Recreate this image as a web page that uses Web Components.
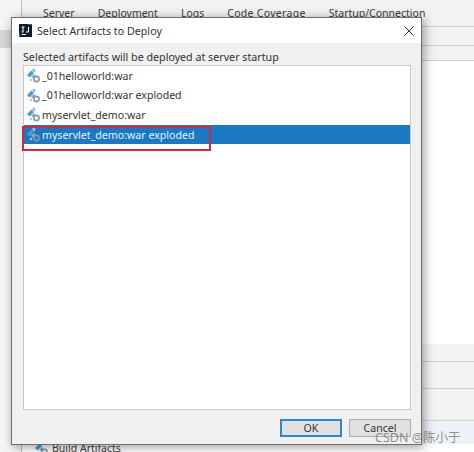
<!DOCTYPE html>
<html>
<head>
<meta charset="utf-8">
<title>Select Artifacts to Deploy</title>
<style>
    html, body { margin: 0; height: 100%; overflow: hidden; background: #fff; }
    body { position: relative; width: 474px; height: 452px; font-family: "Noto Sans", "Open Sans", sans-serif; color: #333; }
</style>
</head>
<body>
<ide-backdrop></ide-backdrop>
<artifact-dialog heading="Select Artifacts to Deploy" hint="Selected artifacts will be deployed at server startup">
    <artifact-row>_01helloworld:war</artifact-row>
    <artifact-row>_01helloworld:war exploded</artifact-row>
    <artifact-row>myservlet_demo:war</artifact-row>
    <artifact-row selected>myservlet_demo:war exploded</artifact-row>
</artifact-dialog>
<water-mark>CSDN @陈小于</water-mark>

<script>
const ARTIFACT_ICON = `
    <svg width="15" height="15" viewBox="0 0 15 15">
        <path d="M1 7 L5.5 2.5 L8 5 L3.5 9.5 Z" fill="#4f9bd0"/>
        <path d="M6 1.5 L8.5 .5 L10 3 L7.5 4.5 Z" fill="#8fbfe0"/>
        <path d="M5 8.5 L8 6 L10 8 L7 10.5 Z" fill="#7fb2d8"/>
        <circle cx="10.5" cy="11" r="2.6" fill="none" stroke="#8f959a" stroke-width="1.6"/>
        <circle cx="5" cy="12" r="1.3" fill="#b9c4cc"/>
    </svg>`;

class IdeBackdrop extends HTMLElement {
    constructor() {
        super();
        this.attachShadow({ mode: 'open' });
        this.shadowRoot.innerHTML = `
            <style>
                :host {
                    display: grid;
                    grid-template-columns: 21px 1fr;
                    width: 474px;
                    height: 452px;
                    font-size: 10.5px;
                    color: #3c3c3c;
                }
                #side { background: #f5f5f5; padding-top: 30px; box-sizing: border-box; }
                #side div { height: 18px; background: #d6d6d6; }
                #main {
                    display: flex;
                    flex-direction: column;
                    border-left: 1px solid #bdbdbd;
                    min-width: 0;
                    background: #fff;
                }
                #tabs {
                    display: flex;
                    gap: 23px;
                    height: 27px;
                    box-sizing: border-box;
                    padding: 5px 0 0 21px;
                    background: #f2f2f2;
                    border-bottom: 1px solid #cfcfcf;
                    line-height: 16px;
                    white-space: nowrap;
                }
                #coverage { letter-spacing: .3px; }
                #strip1 { height: 18px; background: #f2f2f2; border-bottom: 1px solid #cfcfcf; }
                #strip2 { height: 14px; background: #f2f2f2; border-bottom: 1px solid #cfcfcf; }
                #blank { flex: 1; }
                .low { border-bottom: 1px solid #d2d2d2; background: #f3f3f3; }
                #foot { height: 23px; background: #eef2f8; }
                #build {
                    display: flex;
                    align-items: center;
                    gap: 3px;
                    height: 8px;
                    padding-left: 12px;
                    line-height: 14px;
                    background: #fff;
                }
                #build svg { flex: none; }
            </style>
            <div id="side"><div></div></div>
            <div id="main">
                <div id="tabs">
                    <span>Server</span><span>Deployment</span><span>Logs</span><span id="coverage">Code Coverage</span><span>Startup/Connection</span>
                </div>
                <div id="strip1"></div>
                <div id="strip2"></div>
                <div id="blank"></div>
                <div class="low" style="height:17px"></div>
                <div class="low" style="height:26px"></div>
                <div class="low" style="height:31px"></div>
                <div id="foot"></div>
                <div id="build">${ARTIFACT_ICON}<span>Build Artifacts</span></div>
            </div>
        `;
    }
}

class ArtifactDialog extends HTMLElement {
    constructor() {
        super();
        this.attachShadow({ mode: 'open' });
        this.shadowRoot.innerHTML = `
            <style>
                :host {
                    position: absolute;
                    left: 11px;
                    top: 17px;
                    width: 411px;
                    height: 428px;
                    box-sizing: border-box;
                    display: flex;
                    flex-direction: column;
                    background: #f0f0f0;
                    border: 1px solid #6e6e6e;
                    box-shadow: 2px 2px 10px rgba(0,0,0,.4);
                    font-size: 10.6px;
                    color: #333;
                }
                #title {
                    display: flex;
                    align-items: center;
                    height: 25px;
                    flex: none;
                    background: #fff;
                    padding: 0 0 0 7px;
                }
                #logo { margin-right: 5px; display: block; flex: none; }
                #title span { flex: 1; font-size: 10.7px; }
                #close { margin-right: 7px; display: block; }
                #hint {
                    height: 22px;
                    box-sizing: border-box;
                    padding: 6px 0 0 11px;
                    line-height: 16px;
                    font-size: 10.7px;
                    flex: none;
                    white-space: nowrap;
                }
                #list {
                    flex: 1;
                    margin: 0 10px 0 11px;
                    background: #fff;
                    border: 1px solid #c9c9c9;
                    min-height: 0;
                }
                #buttons {
                    flex: none;
                    display: flex;
                    justify-content: flex-end;
                    gap: 7px;
                    height: 34px;
                    box-sizing: border-box;
                    padding: 9px 10px 0 0;
                }
                button {
                    width: 62px;
                    height: 18px;
                    box-sizing: border-box;
                    padding: 0;
                    font: inherit;
                    color: #333;
                    background: #e1e1e1;
                    border: 1px solid #adadad;
                }
                button.primary { border: 2px solid #2a87d0; }
            </style>
            <div id="title">
                <svg id="logo" width="13" height="13" viewBox="0 0 13 13">
                    <rect width="13" height="13" fill="#0f1a2a"/>
                    <path d="M0 13 V9 M13 0 H9" stroke="#2f7fc0" stroke-width="1.5"/>
                    <path d="M2.5 3 H5.5 M4 3 V8 H2.5 M9.5 3 V7.5 Q9.5 8 9 8 H7" stroke="#fff" stroke-width="1.1" fill="none"/>
                    <path d="M2.5 10.5 H7" stroke="#fff" stroke-width="1"/>
                </svg>
                <span></span>
                <svg id="close" width="10" height="10" viewBox="0 0 10 10">
                    <path d="M.5 .5 L9.5 9.5 M9.5 .5 L.5 9.5" stroke="#333" stroke-width="1" fill="none"/>
                </svg>
            </div>
            <div id="hint"></div>
            <div id="list"><slot></slot></div>
            <div id="buttons">
                <button class="primary">OK</button>
                <button>Cancel</button>
            </div>
        `;
    }

    connectedCallback() {
        this.shadowRoot.querySelector('#title span').textContent = this.getAttribute('heading');
        this.shadowRoot.querySelector('#hint').textContent = this.getAttribute('hint');
    }
}

class ArtifactRow extends HTMLElement {
    constructor() {
        super();
        this.attachShadow({ mode: 'open' });
        this.shadowRoot.innerHTML = `
            <style>
                :host {
                    display: flex;
                    align-items: center;
                    gap: 1px;
                    height: 19.6px;
                    padding-left: 2px;
                    white-space: nowrap;
                    position: relative;
                }
                :host([selected]) { background: #1b78c2; color: #e8f2fa; }
                svg { flex: none; }
                #mark {
                    display: none;
                    position: absolute;
                    left: -2px;
                    top: 1px;
                    width: 189px;
                    height: 25px;
                    box-sizing: border-box;
                    border: 2px solid #cf2a3a;
                }
                :host([selected]) #mark { display: block; }
            </style>
            ${ARTIFACT_ICON}
            <span><slot></slot></span>
            <div id="mark"></div>
        `;
    }
}

class WaterMark extends HTMLElement {
    constructor() {
        super();
        this.attachShadow({ mode: 'open' });
        this.shadowRoot.innerHTML = `
            <style>
                :host {
                    position: absolute;
                    left: 375px;
                    top: 430px;
                    font: 12.5px/16px "Noto Sans", "Noto Sans CJK SC", sans-serif;
                    color: rgba(110,110,110,.75);
                    white-space: nowrap;
                }
            </style>
            <slot></slot>
        `;
    }
}

customElements.define('ide-backdrop', IdeBackdrop);
customElements.define('artifact-dialog', ArtifactDialog);
customElements.define('artifact-row', ArtifactRow);
customElements.define('water-mark', WaterMark);
</script>
</body>
</html>
